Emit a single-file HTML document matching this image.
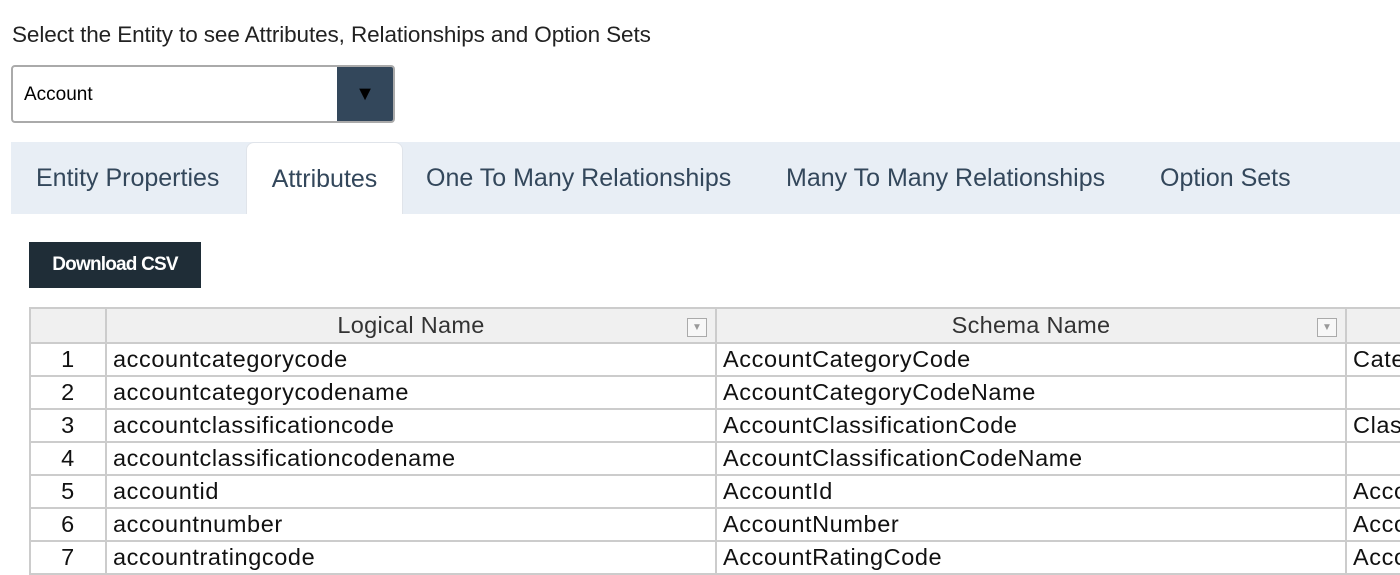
<!DOCTYPE html>
<html><head><style>
*{box-sizing:border-box;margin:0;padding:0}
body{width:1400px;height:560px;overflow:hidden;background:#fff;font-family:"Liberation Sans",sans-serif;color:#222;position:relative}
.h{position:absolute;left:12px;top:22px;font-size:22.5px;letter-spacing:-0.1px;color:#222;white-space:nowrap}
.sel{position:absolute;left:11px;top:65px;width:384px;height:58px;border:2px solid #aaa;border-radius:4px;overflow:hidden}
.sel span{position:absolute;left:11px;top:17px;font-size:19px;color:#000}
.sel .b{position:absolute;right:0;top:-2px;width:56px;height:60px;background:#33475b;color:#000;font-size:20px;text-align:center;line-height:58px}
.tabs{position:absolute;left:11px;top:142px;width:1389px;height:72px;background:#e8eef5}
.tab{position:absolute;top:0;height:72px;font-size:25px;line-height:72px;color:#33475b;white-space:nowrap}
.act{background:#fff;border:1px solid #e0e4ea;border-bottom:none;border-radius:8px 8px 0 0}
.btn{position:absolute;left:29px;top:242px;width:172px;height:46px;background:#1f2d37;color:#fff;font-size:19px;font-weight:bold;letter-spacing:-0.8px;text-align:center;line-height:46px}
table{position:absolute;left:29px;top:307px;border-collapse:collapse;font-size:23.5px;letter-spacing:0.6px;color:#111;table-layout:fixed;width:1416px}
td,th{border:2px solid #ccc;height:33px;padding:0 6px;white-space:nowrap;overflow:hidden}
th{background:#f0f0f0;font-weight:normal;color:#333;position:relative;height:35px;letter-spacing:0.3px}
td.n{text-align:center;padding:0}
.f{position:absolute;right:8px;top:9px;width:20px;height:19px;border:1px solid #aaa;background:#f7f7f7;font-size:10px;color:#999;line-height:17px;text-align:center;letter-spacing:0}
</style></head><body>
<div class="h">Select the Entity to see Attributes, Relationships and Option Sets</div>
<div class="sel"><span>Account</span><div class="b">▼</div></div>
<div class="tabs">
<div class="tab" style="left:25px">Entity Properties</div>
<div class="tab act" style="left:235px;width:157px;text-align:center">Attributes</div>
<div class="tab" style="left:415px">One To Many Relationships</div>
<div class="tab" style="left:775px">Many To Many Relationships</div>
<div class="tab" style="left:1149px">Option Sets</div>
</div>
<div class="btn">Download CSV</div>
<table>
<colgroup><col style="width:76px"><col style="width:610px"><col style="width:630px"><col style="width:100px"></colgroup>
<tr><th></th><th>Logical Name<div class="f">▼</div></th><th>Schema Name<div class="f">▼</div></th><th></th></tr>
<tr><td class="n">1</td><td>accountcategorycode</td><td>AccountCategoryCode</td><td>Category</td></tr>
<tr><td class="n">2</td><td>accountcategorycodename</td><td>AccountCategoryCodeName</td><td></td></tr>
<tr><td class="n">3</td><td>accountclassificationcode</td><td>AccountClassificationCode</td><td>Classification</td></tr>
<tr><td class="n">4</td><td>accountclassificationcodename</td><td>AccountClassificationCodeName</td><td></td></tr>
<tr><td class="n">5</td><td>accountid</td><td>AccountId</td><td>Account</td></tr>
<tr><td class="n">6</td><td>accountnumber</td><td>AccountNumber</td><td>Account</td></tr>
<tr><td class="n">7</td><td>accountratingcode</td><td>AccountRatingCode</td><td>Account</td></tr>
</table>
</body></html>
